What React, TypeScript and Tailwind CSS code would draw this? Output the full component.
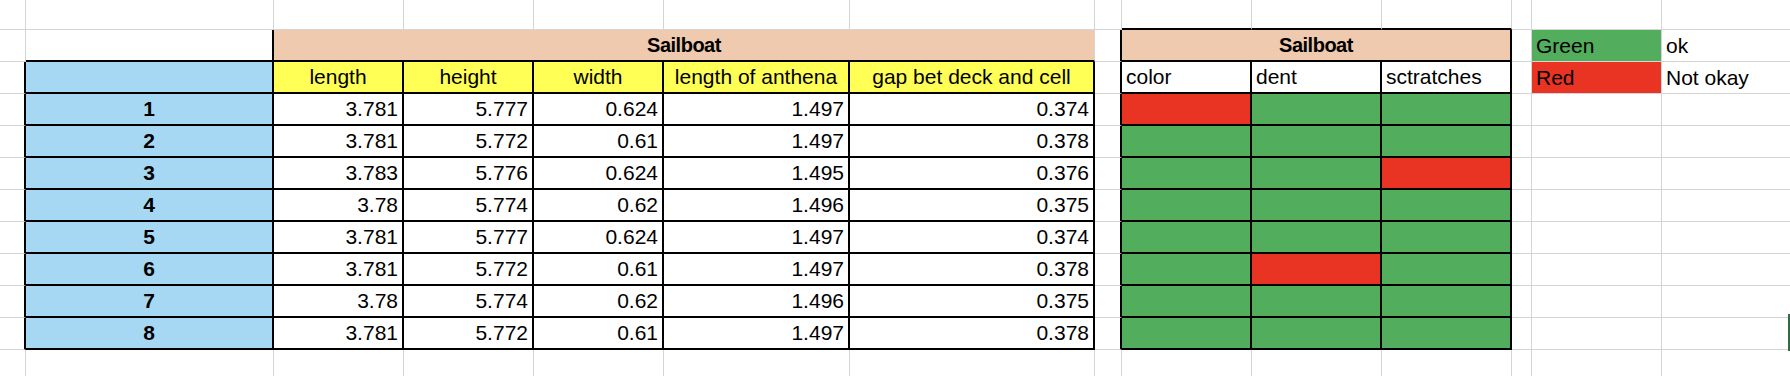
import React from "react";
import clsx from "clsx";

const GREEN = "bg-[#52ad5d]";
const RED = "bg-[#e93424]";

const rows: [string, string, string, string, string, string, string][] = [
  ["1", "3.781", "5.777", "0.624", "1.497", "0.374", "rgg"],
  ["2", "3.781", "5.772", "0.61", "1.497", "0.378", "ggg"],
  ["3", "3.783", "5.776", "0.624", "1.495", "0.376", "ggr"],
  ["4", "3.78", "5.774", "0.62", "1.496", "0.375", "ggg"],
  ["5", "3.781", "5.777", "0.624", "1.497", "0.374", "ggg"],
  ["6", "3.781", "5.772", "0.61", "1.497", "0.378", "grg"],
  ["7", "3.78", "5.774", "0.62", "1.496", "0.375", "ggg"],
  ["8", "3.781", "5.772", "0.61", "1.497", "0.378", "ggg"],
];

const headers = ["length", "height", "width", "length of anthena", "gap bet deck and cell"];

function Cell({
  children,
  className,
}: {
  children?: React.ReactNode;
  className?: string;
}) {
  return (
    <div
      className={clsx(
        "flex items-end pb-[3px] leading-6 whitespace-nowrap overflow-hidden border-r border-b border-[#d5d5d5]",
        className
      )}
    >
      {children}
    </div>
  );
}

// black grid edges, drawn on right + bottom of each boxed cell
const boxed = "border-r-2 border-b-2 border-r-black border-b-black";
const leftEdge = "border-r-2 border-r-black";

function BlankRow({ top }: { top?: boolean }) {
  return (
    <>
      {Array.from({ length: 14 }).map((_, i) => (
        <Cell
          key={i}
          className={clsx(
            i === 13 && "border-r-0",
            top && i >= 8 && i <= 10 && "border-b-2 border-b-black"
          )}
        />
      ))}
    </>
  );
}

export default function App() {
  return (
    <div className="w-[1790px] h-[376px] overflow-hidden bg-white text-black text-[21px] font-['Liberation_Sans',Arial,sans-serif]">
      <div className="grid grid-cols-[26px_248px_130px_130px_130px_186px_245px_27px_130px_130px_130px_20px_130px_128px] grid-rows-[30px_repeat(11,32px)]">
        <BlankRow top />

        {/* group headers */}
        <Cell />
        <Cell className={boxed} />
        <Cell className="col-span-5 justify-center bg-[#efcaaf] border-b-2 border-b-black font-bold text-[20px] tracking-[-0.5px]">
          Sailboat
        </Cell>
        <Cell className={leftEdge} />
        <Cell className={clsx("col-span-3 justify-center bg-[#efcaaf] font-bold text-[20px] tracking-[-0.5px]", boxed)}>
          Sailboat
        </Cell>
        <Cell />
        <Cell className={clsx(GREEN, "pl-1")}>Green</Cell>
        <Cell className="pl-1 border-r-0">ok</Cell>

        {/* column headers */}
        <Cell className={leftEdge} />
        <Cell className={clsx("bg-[#a6d8f4]", boxed)} />
        {headers.map((h) => (
          <Cell key={h} className={clsx("justify-center bg-[#ffff55]", boxed)}>
            {h}
          </Cell>
        ))}
        <Cell className={leftEdge} />
        {["color", "dent", "sctratches"].map((h) => (
          <Cell key={h} className={clsx("pl-1", boxed)}>
            {h}
          </Cell>
        ))}
        <Cell />
        <Cell className={clsx(RED, "pl-1")}>Red</Cell>
        <Cell className="pl-1 border-r-0">Not okay</Cell>

        {rows.map(([n, a, b, c, d, e, marks], ri) => (
          <React.Fragment key={n}>
            <Cell className={leftEdge} />
            <Cell className={clsx("justify-center bg-[#a6d8f4] font-bold", boxed)}>{n}</Cell>
            {[a, b, c, d, e].map((v, i) => (
              <Cell key={i} className={clsx("justify-end pr-1", boxed)}>
                {v}
              </Cell>
            ))}
            <Cell className={leftEdge} />
            {marks.split("").map((m, i) => (
              <Cell key={i} className={clsx(m === "r" ? RED : GREEN, boxed)} />
            ))}
            <Cell />
            <Cell />
            <Cell className="relative overflow-visible border-r-0">
              {ri === 7 && (
                <span className="absolute right-0 top-[-4px] bottom-[-2px] w-[2px] bg-[#2f6b45]" />
              )}
            </Cell>
          </React.Fragment>
        ))}

        <BlankRow />
      </div>
    </div>
  );
}
